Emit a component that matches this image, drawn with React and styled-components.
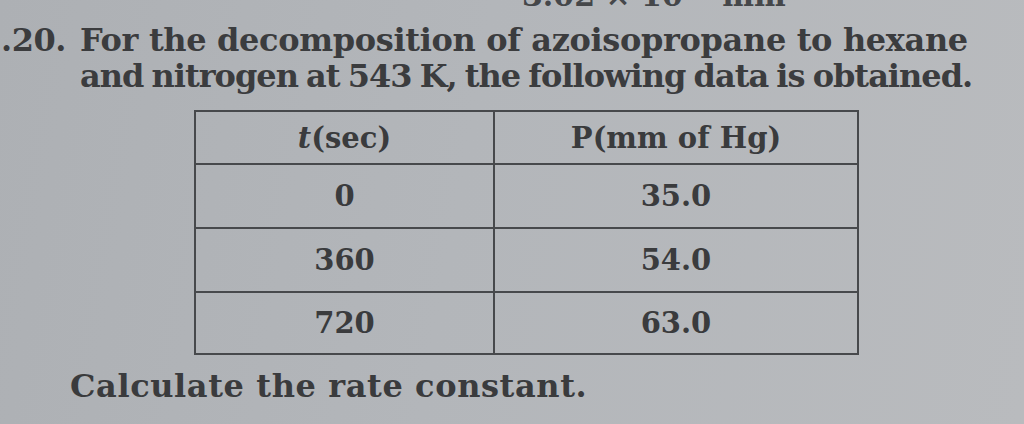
import React from 'react';
import styled, { createGlobalStyle } from 'styled-components';

const GlobalStyle = createGlobalStyle`
  html, body {
    margin: 0;
    padding: 0;
    width: 1024px;
    height: 424px;
    overflow: hidden;
  }
  body {
    background: #b3b6ba;
  }
`;

const Page = styled.div`
  width: 1024px;
  height: 424px;
  overflow: hidden;
  display: flex;
  flex-direction: column;
  background: linear-gradient(100deg, #adb0b4 0%, #b3b6ba 45%, #b9bbbe 100%);
  color: #3b3c3e;
  font-family: "DejaVu Serif", "Liberation Serif", serif;
  font-weight: bold;
`;

// line from the previous question, mostly outside the photo
const CutLine = styled.div`
  margin-top: -19px;
  height: 26px;
  padding-left: 522px;
  font-size: 30px;
  line-height: 30px;
  color: #45474a;
`;

const Question = styled.div`
  margin-top: 15px;
  display: grid;
  grid-template-columns: 80px 888px;
  font-size: 32px;
  line-height: 36px;
`;

const Number = styled.div`
  padding-left: 1px;
  letter-spacing: -0.5px;
`;

const Line = styled.span`
  display: block;
  white-space: nowrap;
  letter-spacing: ${p => p.$track}px;
  word-spacing: ${p => p.$word}px;
`;

const Table = styled.table`
  margin: 16px 0 0 194px;
  width: 665px;
  border-collapse: collapse;
  font-size: 29px;
  color: #3a3b3d;
`;

const Cell = styled.td`
  border: 2px solid #47494c;
  text-align: center;
  height: ${p => p.$h}px;
  padding: 0;
  width: ${p => p.$w || 'auto'};
`;

const Italic = styled.i`
  font-style: italic;
`;

const Footer = styled.div`
  margin: 12px 0 0 70px;
  font-size: 32px;
  letter-spacing: 0.6px;
  color: #3a3b3d;
`;

const rows = [
  ['0', '35.0', 62],
  ['360', '54.0', 62],
  ['720', '63.0', 60],
];

export default function App() {
  return (
    <Page>
      <GlobalStyle />
      <CutLine>3.02 × 10⁻³ mm</CutLine>
      <Question>
        <Number>.20.</Number>
        <div>
          <Line $track={-0.35} $word={0}>For the decomposition of azoisopropane to hexane</Line>
          <Line $track={-1} $word={-2}>and nitrogen at 543 K, the following data is obtained.</Line>
        </div>
      </Question>
      <Table>
        <tbody>
          <tr>
            <Cell $h={51} $w="297px"><Italic>t</Italic>(sec)</Cell>
            <Cell $h={51}>P(mm of Hg)</Cell>
          </tr>
          {rows.map(([t, p, h]) => (
            <tr key={t}>
              <Cell $h={h}>{t}</Cell>
              <Cell $h={h}>{p}</Cell>
            </tr>
          ))}
        </tbody>
      </Table>
      <Footer>Calculate the rate constant.</Footer>
    </Page>
  );
}
